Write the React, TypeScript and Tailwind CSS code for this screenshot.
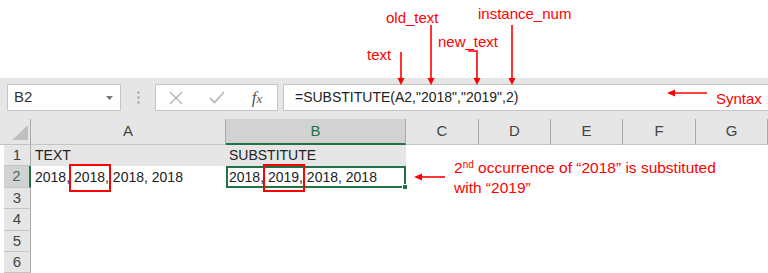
import React from "react";

const RED = "#ff0000";

const cols: { k: string; w: string }[] = [
  { k: "A", w: "w-[195px]" },
  { k: "B", w: "w-[180px]" },
  { k: "C", w: "w-[73px]" },
  { k: "D", w: "w-[72px]" },
  { k: "E", w: "w-[72px]" },
  { k: "F", w: "w-[73px]" },
  { k: "G", w: "w-[72px]" },
];

function RowHead({ n, sel }: { n: number; sel?: boolean }) {
  return (
    <div className="w-[31px] h-full pl-[4px] shrink-0">
      <div
        className={
          sel
            ? "h-full bg-[#d2d2d2] border-r-2 border-r-[#217346] border-b border-b-[#c4c4c4] flex items-center justify-center text-[15px] text-[#4a6b58]"
            : "h-full bg-[#e6e6e6] border-r border-r-[#ababab] border-b border-b-[#c4c4c4] flex items-center justify-center text-[15px] text-[#444]"
        }
      >
        {n}
      </div>
    </div>
  );
}

function Boxed({ children }: { children: React.ReactNode }) {
  return (
    <span className="relative">
      {children}
      <span className="absolute left-[-1px] right-[-2px] top-[-3px] bottom-[-4px] border-2 border-[#ff0000]" />
    </span>
  );
}

export default function App() {
  return (
    <div className="relative w-[768px] h-[273px] bg-white overflow-hidden font-['Liberation_Sans',Arial,sans-serif] text-[#222]">
      {/* annotation space */}
      <div className="relative h-[78px]">
        <span className="absolute left-[367px] top-[47px] text-[15px] leading-none text-[#ff0000]">text</span>
        <span className="absolute left-[386px] top-[10px] text-[15px] leading-none text-[#ff0000]">old_text</span>
        <span className="absolute left-[438px] top-[34px] text-[15px] leading-none text-[#ff0000]">new_text</span>
        <span className="absolute left-[478px] top-[6px] text-[15px] leading-none text-[#ff0000]">instance_num</span>
      </div>

      {/* grey band: toolbar + column headers */}
      <div className="bg-[#e6e6e6] pt-[6px]">
        <div className="flex items-center h-[27px]">
          <div className="ml-[7px] w-[114px] h-full bg-white border border-[#c6c6c6] flex items-center justify-between pl-[6px] pr-[7px]">
            <span className="text-[15px] text-[#333]">B2</span>
            <svg width="7" height="4" viewBox="0 0 7 4">
              <polygon points="0,0 7,0 3.5,4" fill="#777" />
            </svg>
          </div>
          <div className="w-[34px] flex justify-center">
            <svg width="3" height="13" viewBox="0 0 3 13">
              <circle cx="1.5" cy="1.5" r="1.2" fill="#a8a8a8" />
              <circle cx="1.5" cy="6.5" r="1.2" fill="#a8a8a8" />
              <circle cx="1.5" cy="11.5" r="1.2" fill="#a8a8a8" />
            </svg>
          </div>
          <div className="w-[123px] h-full bg-white border border-[#c6c6c6] flex items-center">
            <div className="w-[40px] flex justify-center">
              <svg width="14" height="14" viewBox="0 0 14 14">
                <path d="M1 1 L13 13 M13 1 L1 13" stroke="#b4b4b4" strokeWidth="1.4" fill="none" />
              </svg>
            </div>
            <div className="w-[42px] flex justify-center">
              <svg width="16" height="13" viewBox="0 0 16 13">
                <path d="M1 7 L5.5 11.5 L15 1" stroke="#b4b4b4" strokeWidth="1.6" fill="none" />
              </svg>
            </div>
            <div className="w-[38px] flex justify-center">
              <span className="font-['Liberation_Serif',serif] italic text-[17px] text-[#555]">
                f<span className="text-[13px]">x</span>
              </span>
            </div>
          </div>
          <div className="ml-[5px] flex-1 h-full bg-white border border-[#c6c6c6] border-r-0 flex items-center pl-[11px] relative">
            <span className="text-[14px] text-[#222]">=SUBSTITUTE(A2,"2018","2019",2)</span>
            <span className="absolute left-[432px] top-[3px] text-[15px] text-[#ff0000]">Syntax</span>
          </div>
        </div>

        {/* column header row */}
        <div className="flex h-[26px] mt-[8px]">
          <div className="w-[31px] shrink-0 border-r border-r-[#ababab] border-b border-b-[#c4c4c4] relative">
            <svg className="absolute left-[12px] top-[6px]" width="16" height="15" viewBox="0 0 16 15">
              <polygon points="16,0 16,15 0,15" fill="#c0c0c0" />
            </svg>
          </div>
          {cols.map((c) =>
            c.k === "B" ? (
              <div
                key={c.k}
                className={`${c.w} shrink-0 bg-[#d2d2d2] border-r border-r-[#ababab] border-b-2 border-b-[#217346] flex items-center justify-center text-[15px] text-[#217346]`}
              >
                {c.k}
              </div>
            ) : (
              <div
                key={c.k}
                className={`${c.w} shrink-0 border-r border-r-[#ababab] border-b border-b-[#c4c4c4] flex items-center justify-center text-[15px] text-[#444]`}
              >
                {c.k}
              </div>
            )
          )}
        </div>
      </div>

      {/* row 1 */}
      <div className="flex h-[21px]">
        <RowHead n={1} />
        <div className="w-[195px] shrink-0 bg-[#e6e6e6] flex items-center pl-[4px] text-[14px]">TEXT</div>
        <div className="w-[180px] shrink-0 bg-[#e6e6e6] flex items-center pl-[3px] text-[14px]">SUBSTITUTE</div>
        <div className="flex-1" />
      </div>

      {/* row 2 */}
      <div className="flex h-[22px]">
        <RowHead n={2} sel />
        <div className="w-[195px] shrink-0 flex items-center pl-[4px] text-[14px] whitespace-pre">
          2018,<Boxed> 2018,</Boxed> 2018, 2018
        </div>
        <div className="w-[180px] shrink-0 relative border-2 border-[#217346] flex items-center pl-[1px] text-[14px] whitespace-pre">
          2018,<Boxed> 2019,</Boxed> 2018, 2018
          <span className="absolute right-[-4px] bottom-[-4px] w-[6px] h-[6px] bg-[#217346] border border-white" />
        </div>
        <div className="flex-1 relative">
          <div className="absolute left-[48px] top-[-8px] text-[15.5px] leading-[20px] text-[#ff0000] whitespace-nowrap">
            <div>
              2<sup className="text-[10px]">nd</sup> occurrence of “2018” is substituted
            </div>
            <div>with “2019”</div>
          </div>
        </div>
      </div>

      {/* rows 3-6 */}
      {[3, 4, 5, 6].map((n) => (
        <div key={n} className={n === 4 ? "flex h-[22px]" : "flex h-[21px]"}>
          <RowHead n={n} />
          <div className="flex-1" />
        </div>
      ))}

      {/* arrows overlay */}
      <svg className="absolute inset-0 pointer-events-none" width="768" height="273" viewBox="0 0 768 273">
        <g stroke={RED} strokeWidth="1.6" fill="none">
          <line x1="401" y1="52" x2="401" y2="79" />
          <line x1="431" y1="25" x2="431" y2="79" />
          <polyline points="468,51 477,51 477,79" />
          <line x1="512" y1="25" x2="512" y2="79" />
          <line x1="707" y1="93" x2="673" y2="93" />
          <line x1="445" y1="177" x2="421" y2="177" />
        </g>
        <g fill={RED}>
          <polygon points="397.5,78 404.5,78 401,85" />
          <polygon points="427.5,78 434.5,78 431,85" />
          <polygon points="473.5,78 480.5,78 477,85" />
          <polygon points="508.5,78 515.5,78 512,85" />
          <polygon points="675,89.5 675,96.5 667,93" />
          <polygon points="422,173.5 422,180.5 414,177" />
        </g>
      </svg>
    </div>
  );
}
